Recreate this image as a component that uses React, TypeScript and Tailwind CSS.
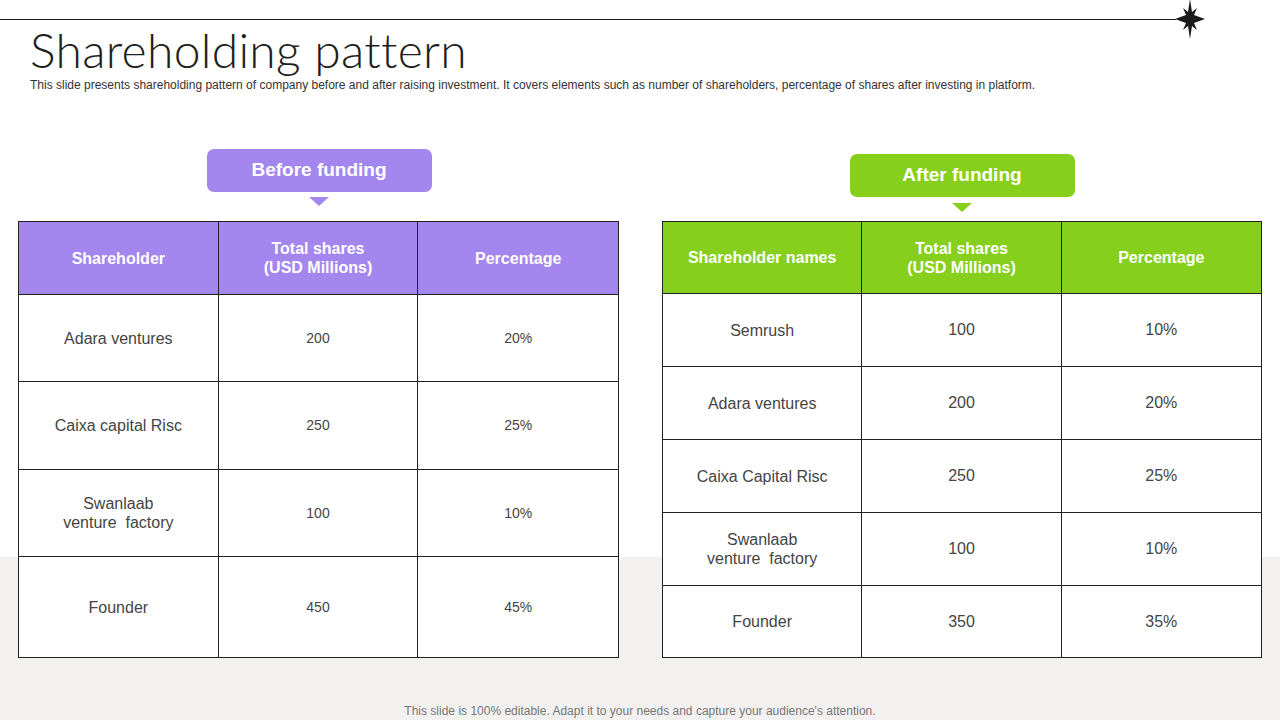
const before = [
  { name: ["Adara ventures"], shares: "200", pct: "20%", h: "h-[87px]" },
  { name: ["Caixa capital Risc"], shares: "250", pct: "25%", h: "h-[88px]" },
  { name: ["Swanlaab", "venture  factory"], shares: "100", pct: "10%", h: "h-[87px]" },
  { name: ["Founder"], shares: "450", pct: "45%", h: "h-[100px]" },
];

const after = [
  { name: ["Semrush"], shares: "100", pct: "10%" },
  { name: ["Adara ventures"], shares: "200", pct: "20%" },
  { name: ["Caixa Capital Risc"], shares: "250", pct: "25%" },
  { name: ["Swanlaab", "venture  factory"], shares: "100", pct: "10%" },
  { name: ["Founder"], shares: "350", pct: "35%" },
];

const Star = () => (
  <svg width="30" height="40" viewBox="0 0 30 40" className="-ml-px shrink-0">
    <path
      d="M15 0 L17 13 L22 9 L19 16 L30 20 L19 24 L22 31 L17 27 L15 40 L13 27 L8 31 L11 24 L0 20 L11 16 L8 9 L13 13 Z"
      fill="#1a1a1a"
    />
  </svg>
);

const HeaderCell = ({ children }: { children: React.ReactNode }) => (
  <div className="flex items-center justify-center border-r border-[#222] last:border-r-0 text-center text-[16px] font-bold leading-[19px] text-white">
    {children}
  </div>
);

const App = () => {
  return (
    <div className="relative w-[1280px] h-[720px] overflow-hidden bg-[linear-gradient(to_bottom,#ffffff_557px,#f2f1ef_557px)] font-['Liberation_Sans',Arial,sans-serif]">
      {/* top rule with star */}
      <div className="flex items-center h-[40px] -mt-[1px] pr-[75px]">
        <div className="h-px flex-1 bg-[#1a1a1a]" />
        <Star />
      </div>

      <div className="pl-[30px] -mt-[16px]">
        <h1 className="text-[48px] leading-[54px] font-light text-[#1e1e1e] font-['Lato',sans-serif] tracking-[0.3px]">
          Shareholding pattern
        </h1>
        <p className="mt-[1px] text-[12px] leading-[14px] text-[#333]">
          This slide presents shareholding pattern of company before and after raising investment. It covers elements such as number of shareholders, percentage of shares after investing in platform.
        </p>
      </div>

      <div className="flex pl-[18px] mt-[57px] gap-[43px]">
        {/* before funding */}
        <div className="flex flex-col w-[601px]">
          <div className="self-center ml-[1px] w-[225px] h-[43px] rounded-[7px] bg-[#a386ee] flex items-center justify-center text-[19px] font-bold text-white">
            Before funding
          </div>
          <div className="self-center mt-[5px] w-0 h-0 border-l-[10px] border-r-[10px] border-t-[9px] border-l-transparent border-r-transparent border-t-[#a386ee]" />
          <div className="mt-[15px] border border-[#222] bg-white">
            <div className="grid grid-cols-3 h-[73px] bg-[#a386ee] border-b border-[#222]">
              <HeaderCell>Shareholder</HeaderCell>
              <HeaderCell>
                Total shares
                <br />
                (USD Millions)
              </HeaderCell>
              <HeaderCell>Percentage</HeaderCell>
            </div>
            {before.map((r, i) => (
              <div
                key={i}
                className={`grid grid-cols-3 ${r.h} border-b border-[#222] last:border-b-0`}
              >
                <div className="flex items-center justify-center border-r border-[#222] text-center text-[16px] leading-[19px] text-[#444]">
                  <span>
                    {r.name.map((n, j) => (
                      <span key={j} className="block whitespace-pre">{n}</span>
                    ))}
                  </span>
                </div>
                <div className="flex items-center justify-center border-r border-[#222] text-[14px] text-[#444]">
                  {r.shares}
                </div>
                <div className="flex items-center justify-center text-[14px] text-[#444]">
                  {r.pct}
                </div>
              </div>
            ))}
          </div>
        </div>

        {/* after funding */}
        <div className="flex flex-col w-[600px]">
          <div className="self-center mt-[5px] w-[225px] h-[43px] rounded-[7px] bg-[#86cf1d] flex items-center justify-center text-[19px] font-bold text-white">
            After funding
          </div>
          <div className="self-center mt-[6px] w-0 h-0 border-l-[10px] border-r-[10px] border-t-[9px] border-l-transparent border-r-transparent border-t-[#86cf1d]" />
          <div className="mt-[9px] border border-[#222] bg-white">
            <div className="grid grid-cols-3 h-[72px] bg-[#86cf1d] border-b border-[#222]">
              <HeaderCell>Shareholder names</HeaderCell>
              <HeaderCell>
                Total shares
                <br />
                (USD Millions)
              </HeaderCell>
              <HeaderCell>Percentage</HeaderCell>
            </div>
            {after.map((r, i) => (
              <div key={i} className="grid grid-cols-3 h-[73px] border-b border-[#222] last:border-b-0 last:h-[71px]">
                <div className="flex items-center justify-center border-r border-[#222] text-center text-[16px] leading-[19px] text-[#444]">
                  <span>
                    {r.name.map((n, j) => (
                      <span key={j} className="block whitespace-pre">{n}</span>
                    ))}
                  </span>
                </div>
                <div className="flex items-center justify-center border-r border-[#222] text-[16px] text-[#444]">
                  {r.shares}
                </div>
                <div className="flex items-center justify-center text-[16px] text-[#444]">
                  {r.pct}
                </div>
              </div>
            ))}
          </div>
        </div>
      </div>

      <p className="mt-[46px] text-center text-[12px] leading-[14px] text-[#777]">
        This slide is 100% editable. Adapt it to your needs and capture your audience's attention.
      </p>
    </div>
  );
};

export default App;
